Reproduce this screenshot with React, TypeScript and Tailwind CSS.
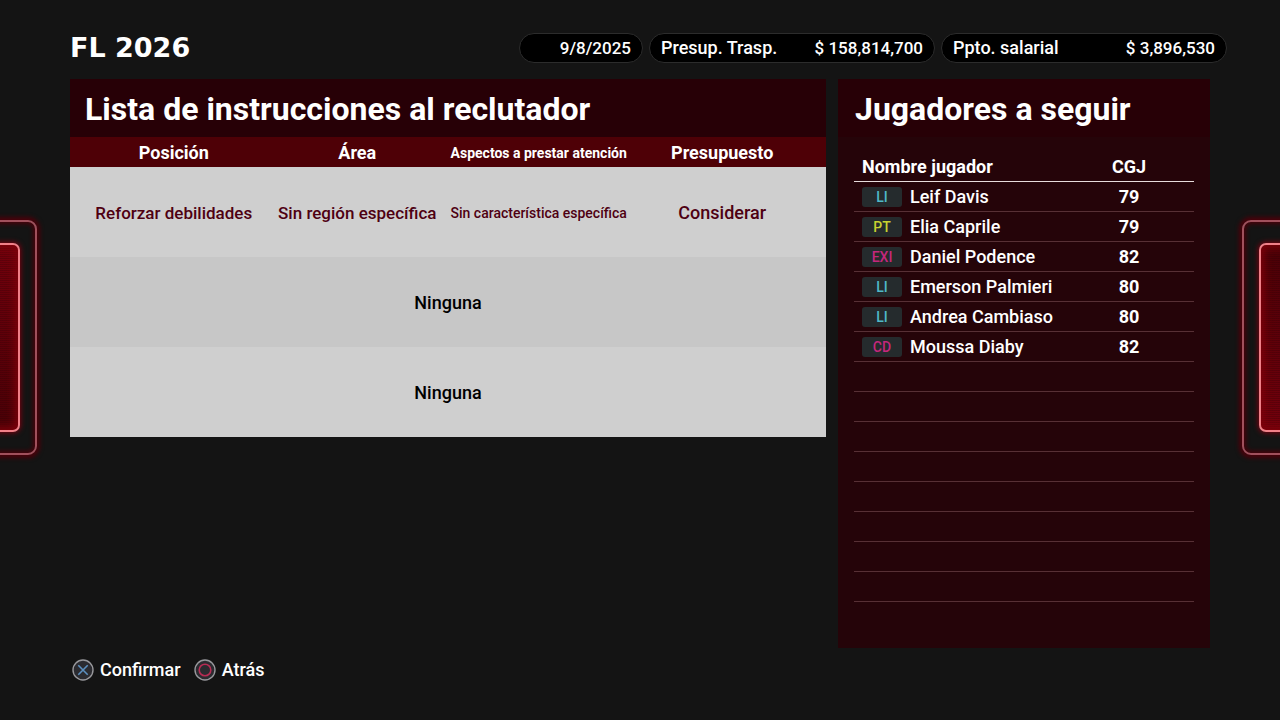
import clsx from 'clsx';

type Player = {
  position: string;
  name: string;
  rating: number;
};

const players: Player[] = [
  { position: 'LI', name: 'Leif Davis', rating: 79 },
  { position: 'PT', name: 'Elia Caprile', rating: 79 },
  { position: 'EXI', name: 'Daniel Podence', rating: 82 },
  { position: 'LI', name: 'Emerson Palmieri', rating: 80 },
  { position: 'LI', name: 'Andrea Cambiaso', rating: 80 },
  { position: 'CD', name: 'Moussa Diaby', rating: 82 },
];

const EMPTY_PLAYER_ROWS = 8;

const positionColors: Record<string, string> = {
  LI: 'text-[#4fb8c8]',
  PT: 'text-[#c8d230]',
  EXI: 'text-[#c4277c]',
  CD: 'text-[#c4277c]',
};

const Header = () => (
  <header className="flex items-center justify-between pl-[70px] pr-[53px] pt-[33px]">
    <h1 className="font-['DejaVu_Sans',sans-serif] text-[27px] font-bold leading-[28px]">FL 2026</h1>
    <div className="flex gap-[6px] text-[18px] leading-[28px]">
      <div className="w-[124px] rounded-full border border-[#2c2c2c] bg-black px-[11px] text-right text-[17px]">
        9/8/2025
      </div>
      <Budget label="Presup. Trasp." amount="$ 158,814,700" />
      <Budget label="Ppto. salarial" amount="$ 3,896,530" />
    </div>
  </header>
);

const Budget = ({ label, amount }: { label: string; amount: string }) => (
  <div className="flex w-[286px] justify-between rounded-full border border-[#2c2c2c] bg-black px-[11px]">
    <span>{label}</span>
    <span className="text-[17px]">{amount}</span>
  </div>
);

const InstructionList = () => (
  <section>
    <h2 className="bg-[#270006] px-[15px] pt-0.5 text-[32px] font-bold leading-[56px]">
      Lista de instrucciones al reclutador
    </h2>
    <table className="w-full table-fixed text-center text-[18px] leading-[28px]">
      <colgroup>
        <col className="w-[26%]" />
        <col className="w-[24%]" />
        <col className="w-[24%]" />
        <col className="w-[26%]" />
      </colgroup>
      <thead className="bg-[#4e0006]">
        <tr className="h-[30px]">
          <th className="pl-[11px] pt-0.5 font-bold">Posición</th>
          <th className="pt-0.5 font-bold">Área</th>
          <th className="whitespace-nowrap pt-0.5 text-[14px] font-bold">
            Aspectos a prestar atención
          </th>
          <th className="pr-[11px] pt-0.5 font-bold">Presupuesto</th>
        </tr>
      </thead>
      <tbody className="text-black">
        <tr className="h-[90px] bg-[#cfcfcf] text-[#4e0012]">
          <td className="whitespace-nowrap pl-[11px] pt-0.5 text-[17px]">Reforzar debilidades</td>
          <td className="whitespace-nowrap pt-0.5 text-[17px]">Sin región específica</td>
          <td className="whitespace-nowrap pt-0.5 text-[14px]">Sin característica específica</td>
          <td className="pr-[11px] pt-0.5">Considerar</td>
        </tr>
        <tr className="h-[90px] bg-[#c7c7c7]">
          <td colSpan={4} className="pt-0.5">
            Ninguna
          </td>
        </tr>
        <tr className="h-[90px] bg-[#cfcfcf]">
          <td colSpan={4} className="pt-0.5">
            Ninguna
          </td>
        </tr>
      </tbody>
    </table>
  </section>
);

const PlayerList = () => (
  <section className="bg-[#250409] pb-[46px]">
    <h2 className="bg-[#270006] px-[17px] pt-0.5 text-[32px] font-bold leading-[56px]">
      Jugadores a seguir
    </h2>
    <div className="px-4 pt-[14px]">
      <table className="w-full table-fixed text-[18px] leading-[26px]">
        <colgroup>
          <col />
          <col className="w-[130px]" />
        </colgroup>
        <thead>
          <tr className="h-[30px] border-b border-[#e8dcdc]">
            <th className="pl-2 pt-0.5 text-left font-bold">Nombre jugador</th>
            <th className="pt-0.5 font-bold">CGJ</th>
          </tr>
        </thead>
        <tbody>
          {players.map((player) => (
            <tr key={player.name} className="h-[30px] border-b border-[#573035]">
              <td className="pl-2 pt-0.5">
                <div className="flex items-center gap-2">
                  <span
                    className={clsx(
                      'w-10 rounded-[3px] bg-[#252b2d] text-center text-[14px] leading-[20px]',
                      positionColors[player.position]
                    )}
                  >
                    {player.position}
                  </span>
                  <span>{player.name}</span>
                </div>
              </td>
              <td className="pt-0.5 text-center font-bold">{player.rating}</td>
            </tr>
          ))}
          {Array.from({ length: EMPTY_PLAYER_ROWS }, (_, i) => (
            <tr key={i} className="h-[30px] border-b border-[#573035]">
              <td colSpan={2} />
            </tr>
          ))}
        </tbody>
      </table>
    </div>
  </section>
);

// Glowing frames that peek in from both screen edges
const SideFrame = ({ side }: { side: 'left' | 'right' }) => (
  <div
    className={clsx(
      'absolute top-[220px] h-[235px] w-[60px] rounded-[9px] border-2 border-[#a0505c] py-[21px] shadow-[0_0_4px_3px_#4a000a,inset_0_0_4px_2px_#4a000a]',
      side === 'left' ? '-left-[23px] pr-[15px]' : '-right-[22px] pl-[15px]'
    )}
  >
    <div
      className={clsx(
        'h-full rounded-[7px] border-2 border-[#f08088] bg-[repeating-linear-gradient(to_bottom,transparent_0px,transparent_1px,#25000640_1px,#25000640_2px),linear-gradient(to_bottom,#74000c,#4a0006)] shadow-[0_0_5px_1px_#7a0010,inset_0_0_8px_3px_#80000a]',
        side === 'right' && 'rotate-180'
      )}
    />
  </div>
);

const CrossIcon = () => (
  <svg className="size-[22px]" viewBox="0 0 22 22" fill="none" aria-hidden="true">
    <circle cx="11" cy="11" r="10" fill="#2b2b30" stroke="#98989c" strokeWidth="1.4" />
    <path d="M6.3 6.3l9.4 9.4M15.7 6.3l-9.4 9.4" stroke="#5c90c0" strokeWidth="1.6" />
  </svg>
);

const CircleIcon = () => (
  <svg className="size-[22px]" viewBox="0 0 22 22" fill="none" aria-hidden="true">
    <circle cx="11" cy="11" r="10" fill="#2b2b30" stroke="#98989c" strokeWidth="1.4" />
    <circle cx="11" cy="11" r="5.8" stroke="#b82c54" strokeWidth="1.6" />
  </svg>
);

const Footer = () => (
  <footer className="flex gap-[13px] px-[72px] pt-2 text-[18px] leading-[28px]">
    <button type="button" className="flex items-center gap-[6px]">
      <CrossIcon />
      Confirmar
    </button>
    <button type="button" className="flex items-center gap-[6px]">
      <CircleIcon />
      Atrás
    </button>
  </footer>
);

const App = () => {
  return (
    <div className="relative flex min-h-screen flex-col overflow-hidden bg-[#141414] font-['Roboto',sans-serif] font-medium text-white">
      <Header />
      <main className="mt-4 grid grid-cols-[756fr_372fr] items-start gap-3 px-[70px]">
        <InstructionList />
        <PlayerList />
      </main>
      <Footer />
      <SideFrame side="left" />
      <SideFrame side="right" />
    </div>
  );
};

export default App;
